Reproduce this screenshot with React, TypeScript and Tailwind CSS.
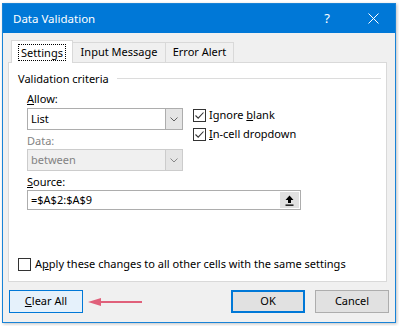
import { ReactNode } from 'react';

const font = { fontFamily: '"Noto Sans", "Open Sans", sans-serif' };

function Check({ checked }: { checked: boolean }) {
  return (
    <span className="w-[13px] h-[13px] border border-[#333] bg-white flex items-center justify-center shrink-0">
      {checked && (
        <svg width="11" height="11" viewBox="0 0 11 11">
          <path d="M1.5 5.5 L4.2 8.2 L9.5 2.5" fill="none" stroke="#333" strokeWidth="1.1" />
        </svg>
      )}
    </span>
  );
}

function Combo({ value, disabled }: { value: string; disabled?: boolean }) {
  return (
    <div
      className={`w-[156px] h-[22px] border flex items-stretch ${
        disabled ? 'border-[#cccccc] bg-[#f0f0f0] text-[#838383]' : 'border-[#adadad] bg-white text-black'
      }`}
    >
      <span className="flex-1 pl-[3px] leading-[20px]">{value}</span>
      <span
        className={`w-[17px] border-l flex items-center justify-center ${
          disabled ? 'border-[#cccccc] bg-[#e5e5e5]' : 'border-[#adadad] bg-[#e5e5e5]'
        }`}
      >
        <svg width="8" height="5" viewBox="0 0 8 5">
          <path d="M0.5 0.5 L4 4 L7.5 0.5" fill="none" stroke={disabled ? '#888' : '#606060'} strokeWidth="1" />
        </svg>
      </span>
    </div>
  );
}

function Btn({ children, focus, primary }: { children: ReactNode; focus?: boolean; primary?: boolean }) {
  return (
    <div
      className={`w-[74px] h-[23px] flex items-center justify-center ${
        primary
          ? 'border-2 border-[#0078d7] bg-[#e1e1e1]'
          : focus
          ? 'border border-[#0078d7] bg-[#e5f1fb]'
          : 'border border-[#adadad] bg-[#e1e1e1]'
      }`}
    >
      {children}
    </div>
  );
}

export default function App() {
  return (
    <div className="w-[399px] h-[326px] bg-white pt-[3px] pl-[2px] text-[11px] text-black" style={font}>
      <div className="w-[394px] h-[320px] border border-[#1883d7] bg-[#f0f0f0] flex flex-col shadow-[1px_1px_3px_rgba(0,0,0,0.25)]">
        {/* Title bar */}
        <div className="h-[29px] bg-[#0078d7] text-white flex items-center pl-[10px]">
          <span className="text-[11.5px] flex-1 pt-[1px]">Data Validation</span>
          <span className="text-[13px] mr-[38px]">?</span>
          <svg width="11" height="11" viewBox="0 0 11 11" className="mr-[16px]">
            <path d="M0.5 0.5 L10.5 10.5 M10.5 0.5 L0.5 10.5" stroke="white" strokeWidth="1" />
          </svg>
        </div>

        {/* Tabs */}
        <div className="flex items-end pl-[8px] mt-[7px] h-[22px] relative z-10">
          <div className="w-[62px] h-[23px] bg-white border border-b-0 border-[#d9d9d9] flex items-center justify-center mb-[-1px]">
            <span className="border border-dotted border-black px-[2px] leading-[15px]">Settings</span>
          </div>
          <div className="w-[93px] h-[20px] border border-l-0 border-b-0 border-[#d9d9d9] flex items-center justify-center">
            Input Message
          </div>
          <div className="w-[68px] h-[20px] border border-l-0 border-b-0 border-[#d9d9d9] flex items-center justify-center">
            Error Alert
          </div>
        </div>

        {/* Panel */}
        <div className="ml-[5px] w-[379px] h-[220px] bg-white border border-[#d9d9d9] flex flex-col">
          <div className="flex items-center mt-[8px] ml-[9px] mr-[5px] h-[16px] leading-[16px]">
            <span>Validation criteria</span>
            <span className="flex-1 h-px bg-[#dcdcdc] ml-[8px] mt-[-1px]"></span>
          </div>

          <div className="flex ml-[18px] mt-[4px]">
            <div className="flex flex-col w-[156px]">
              <span className="leading-[16px] h-[16px]">
                <u>A</u>llow:
              </span>
              <div className="mt-[1px]">
                <Combo value="List" />
              </div>
              <span className="leading-[16px] h-[16px] text-[#838383] mt-[3px]">Data:</span>
              <Combo value="between" disabled />
            </div>
            <div className="flex flex-col ml-[10px] mt-[18px] gap-[6px]">
              <div className="flex items-center gap-[3px] h-[13px]">
                <Check checked />
                <span>
                  Ignore <u>b</u>lank
                </span>
              </div>
              <div className="flex items-center gap-[3px] h-[13px]">
                <Check checked />
                <span>
                  <u>I</u>n-cell dropdown
                </span>
              </div>
            </div>
          </div>

          <div className="ml-[18px] mt-[3px] leading-[16px] h-[16px]">
            <u>S</u>ource:
          </div>
          <div className="ml-[18px] w-[274px] h-[20px] border border-[#adadad] flex items-stretch">
            <span className="flex-1 pl-[3px] leading-[18px]">=$A$2:$A$9</span>
            <span className="w-[21px] bg-[#e1e1e1] border border-white flex items-center justify-center">
              <svg width="9" height="11" viewBox="0 0 9 11">
                <path d="M4.5 0.5 L8.5 5 L6 5 L6 8 L3 8 L3 5 L0.5 5 Z" fill="black" />
                <rect x="0.5" y="9.5" width="8" height="1.3" fill="black" />
              </svg>
            </span>
          </div>

          <div className="flex items-center ml-[9px] mt-[48px] gap-[4px] h-[13px]">
            <Check checked={false} />
            <span>
              A<u>p</u>ply these changes to all other cells with the same settings
            </span>
          </div>
        </div>

        {/* Buttons */}
        <div className="flex items-center mt-[8px] ml-[6px] mr-[6px]">
          <Btn focus>
            <span>
              <u>C</u>lear All
            </span>
          </Btn>
          <svg width="56" height="10" viewBox="0 0 56 10" className="ml-[5px]">
            <path d="M0 5 L13 1 L13 9 Z" fill="#e0607a" />
            <rect x="12" y="4" width="42" height="2" fill="#e0607a" />
          </svg>
          <div className="flex-1"></div>
          <Btn primary>OK</Btn>
          <div className="w-[10px]"></div>
          <Btn>Cancel</Btn>
        </div>
      </div>
    </div>
  );
}
